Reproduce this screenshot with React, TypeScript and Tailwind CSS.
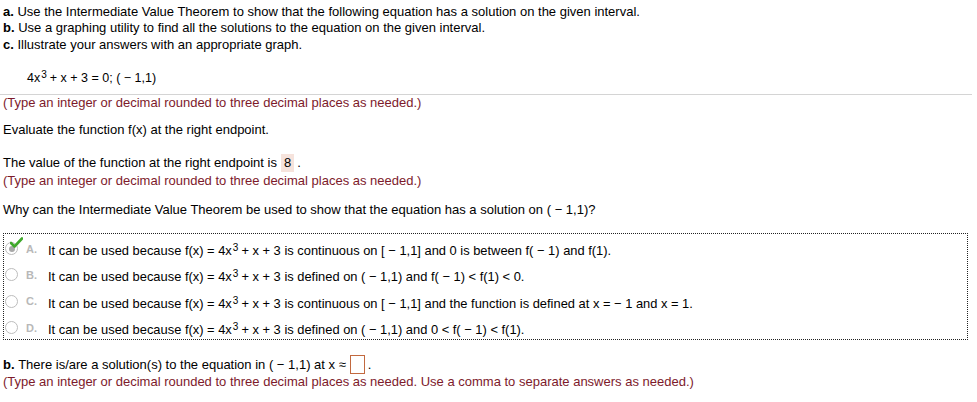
import React from 'react'

const F = { fontFamily: '"Liberation Sans", Arial, sans-serif' }

function Cube() {
  return <sup className="text-[10px] relative -top-[4px] ml-[1px] mr-[3px]">3</sup>
}

function Hint({ children }: { children?: React.ReactNode }) {
  return (
    <p className="text-[#7d1a2b]">
      {children ?? '(Type an integer or decimal rounded to three decimal places as needed.)'}
    </p>
  )
}

function Radio({ checked }: { checked?: boolean }) {
  return (
    <span className="relative w-[13px] h-[13px] rounded-full border border-[#bdbdbd] bg-white flex items-center justify-center shrink-0">
      {checked && <span className="w-[6px] h-[6px] rounded-full bg-[#a8a8a8]" />}
      {checked && (
        <svg className="absolute -top-[6px] left-[4px]" width="13" height="11" viewBox="0 0 13 11">
          <path d="M1 6 L4.5 9.5 L12 1.5" fill="none" stroke="#3fa82a" strokeWidth="2.6" strokeLinecap="round" strokeLinejoin="round" />
        </svg>
      )}
    </span>
  )
}

const options = [
  { key: 'A', checked: true, body: <>is continuous on [ − 1,1] and 0 is between f( − 1) and f(1).</> },
  { key: 'B', body: <>is defined on ( − 1,1) and f( − 1) &lt; f(1) &lt; 0.</> },
  { key: 'C', body: <>is continuous on [ − 1,1] and the function is defined at x = − 1 and x = 1.</> },
  { key: 'D', body: <>is defined on ( − 1,1) and 0 &lt; f( − 1) &lt; f(1).</> },
]

export default function App() {
  return (
    <div className="w-[977px] h-[402px] bg-white text-[13px] leading-[16px] text-black" style={F}>
      <div className="px-[3px] pt-[4px]">
        <p><b>a.</b> Use the Intermediate Value Theorem to show that the following equation has a solution on the given interval.</p>
        <p><b>b.</b> Use a graphing utility to find all the solutions to the equation on the given interval.</p>
        <p className="mt-[1px]"><b>c.</b> Illustrate your answers with an appropriate graph.</p>
        <p className="mt-[17px] pl-[24px] text-[12.5px]">
          4x<Cube />+ x + 3 = 0; ( − 1,1)
        </p>
      </div>
      <div className="mt-[8px] mr-[5px] h-px bg-[#d4d4d4]" />
      <div className="px-[3px]">
        <Hint />
        <p className="mt-[11px]">Evaluate the function f(x) at the right endpoint.</p>
        <p className="mt-[16px] flex items-center">
          The value of the function at the right endpoint is
          <span className="ml-[4px] mr-[3px] px-[3px] bg-[#f6e3dc] leading-[18px]">8</span>.
        </p>
        <div className="mt-[1px]"><Hint /></div>
        <p className="mt-[13px]">Why can the Intermediate Value Theorem be used to show that the equation has a solution on ( − 1,1)?</p>
        <div className="mt-[15px] mr-[6px] h-[107px] border border-dotted border-[#222] pt-[4px] text-[12.9px]">
          {options.map((o) => (
            <div key={o.key} className="flex items-center h-[26.3px]">
              <span className="ml-[1px] -mt-[5px]"><Radio checked={o.checked} /></span>
              <span className="ml-[8px] w-[22px] text-[11px] font-bold text-[#b8b8b8] -mt-[5px]">{o.key}.</span>
              <span>
                It can be used because f(x) = 4x<Cube />+ x + 3 {o.body}
              </span>
            </div>
          ))}
        </div>
        <p className="mt-[15px] flex items-center">
          <b>b.</b>&nbsp;There is/are a solution(s) to the equation in ( − 1,1) at x ≈
          <span className="ml-[4px] w-[15px] h-[19px] border border-[#c2693f] inline-block" />
          <span className="ml-[3px]">.</span>
        </p>
        <Hint>(Type an integer or decimal rounded to three decimal places as needed. Use a comma to separate answers as needed.)</Hint>
      </div>
    </div>
  )
}
